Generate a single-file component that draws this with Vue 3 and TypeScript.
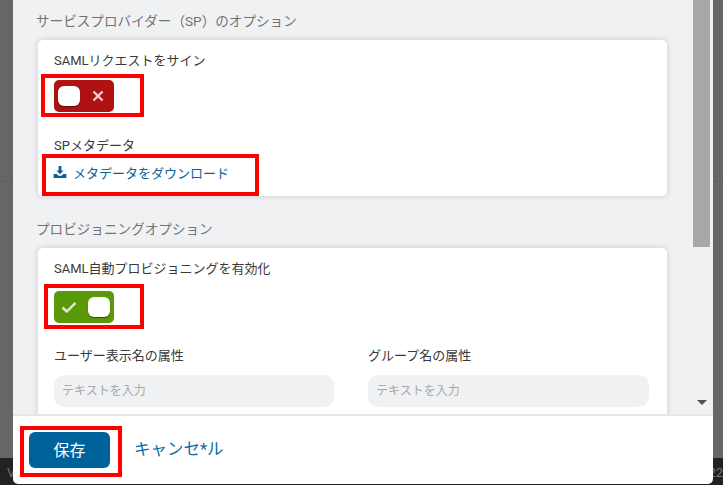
<script setup lang="ts">
const attributes: string[] = ['ユーザー表示名の属性', 'グループ名の属性']
</script>

<template>
  <div class="page">
    <div class="under-line"></div>
    <div class="under-bar"><span>V</span><span>22</span></div>
    <div class="modal">
      <div class="body">
        <div class="scroll">
          <h3 class="section-title first">サービスプロバイダー（SP）のオプション</h3>
          <section class="card first-card">
            <div class="label">SAMLリクエストをサイン</div>
            <div class="mark-wrap">
              <div class="toggle off">
                <span class="knob"></span>
                <svg class="toggle-icon" viewBox="0 0 12 12" width="12" height="12">
                  <path d="M1.5 1.5 10.5 10.5M10.5 1.5 1.5 10.5" fill="none" stroke="#efcfcf" stroke-width="2.4" />
                </svg>
              </div>
              <span class="mark mark-off"></span>
            </div>
            <div class="label sp-label">SPメタデータ</div>
            <div class="mark-wrap dl-wrap">
              <a class="download">
                <svg class="dl-icon" viewBox="0 0 14 14" width="14" height="14">
                  <path d="M5.6 1h2.8v4.4h2.2L7 9.2 3.4 5.4h2.2z" fill="#0b6298" />
                  <path d="M.6 9h3l2 1.8h2.8L10.400 9h3v4H.6z" fill="#0b6298" />
                </svg>
                <span>メタデータをダウンロード</span>
              </a>
              <span class="mark mark-dl"></span>
            </div>
          </section>

          <h3 class="section-title second">プロビジョニングオプション</h3>
          <section class="card second-card">
            <div class="label">SAML自動プロビジョニングを有効化</div>
            <div class="mark-wrap on-wrap">
              <div class="toggle on">
                <svg class="toggle-icon" viewBox="0 0 16 12" width="16" height="12">
                  <path d="M1.500 6.500 5.800 10.500 14.500 1.800" fill="none" stroke="#dfe9cf" stroke-width="2.400" />
                </svg>
                <span class="knob"></span>
              </div>
              <span class="mark mark-on"></span>
            </div>
            <div class="fields">
              <div v-for="name in attributes" :key="name" class="field">
                <div class="label">{{ name }}</div>
                <div class="input">テキストを入力</div>
              </div>
            </div>
          </section>
        </div>
        <div class="scrollbar">
          <div class="thumb"></div>
          <div class="arrow"></div>
        </div>
      </div>
      <div class="footer">
        <div class="save-wrap">
          <button class="save" type="button">保存</button>
          <span class="mark mark-save"></span>
        </div>
        <a class="cancel">キャンセ*ル</a>
      </div>
    </div>
  </div>
</template>

<style>
html, body { margin: 0; padding: 0; }
</style>

<style scoped>
.page {
  position: relative;
  width: 723px;
  height: 485px;
  overflow: hidden;
  background: #666;
  font-family: Roboto, "Noto Sans CJK JP", sans-serif;
}
.under-line {
  position: absolute;
  left: 0;
  right: 0;
  top: 181px;
  height: 1px;
  background: #5e5e5e;
}
.under-bar {
  position: absolute;
  left: 0;
  right: 0;
  top: 458px;
  height: 27px;
  background: #222;
  color: #777;
  font-size: 13px;
  line-height: 30px;
  display: flex;
  justify-content: space-between;
  padding: 0 0 0 7px;
}
.modal {
  position: relative;
  width: 700px;
  height: 484px;
  margin-left: 13px;
  display: flex;
  flex-direction: column;
  background: #fff;
  border-radius: 0 0 5px 5px;
  overflow: hidden;
}
.body {
  height: 414px;
  flex: none;
  display: flex;
  background: #f0f1f3;
  overflow: hidden;
}
.scroll {
  flex: 1;
  min-width: 0;
  padding: 0 13px 0 25px;
  margin-right: 13px;
}
.section-title {
  margin: 0 0 0 -2px;
  font-size: 13.6px;
  font-weight: 400;
  color: #737373;
  line-height: 20px;
}
.section-title.first { padding-top: 11px; }
.section-title.second { margin-top: 23px; }
.card {
  background: #fff;
  border-radius: 5px;
  box-shadow: 0 0 6px rgba(0, 0, 0, .16);
  padding: 12px 16px 0;
  box-sizing: border-box;
}
.first-card { margin-top: 9px; height: 156px; }
.second-card { margin-top: 9px; height: 190px; }
.label {
  font-size: 13px;
  line-height: 18px;
  color: #3a3a3a;
}
.sp-label { margin-top: 25px; }
.mark-wrap {
  position: relative;
  margin-top: 10px;
}
.on-wrap { margin-top: 13px; }
.toggle {
  width: 60px;
  height: 32px;
  border-radius: 5px;
  display: flex;
  align-items: center;
  box-sizing: border-box;
}
.toggle.off {
  background: #ae1212;
  padding-left: 4px;
  justify-content: flex-start;
}
.toggle.off .toggle-icon { margin-left: 12px; }
.toggle.on {
  background: #5a9a08;
  padding: 0 4px 0 7px;
  justify-content: space-between;
}
.knob {
  width: 22px;
  height: 20px;
  background: #fff;
  border-radius: 6px;
  box-shadow: 0 1px 1px rgba(0, 0, 0, .5);
}
.download {
  display: flex;
  align-items: center;
  gap: 6px;
  height: 20px;
  color: #0b6298;
  font-size: 13px;
}
.dl-icon { margin-left: -1px; }
.dl-wrap { margin-top: 7px; }
.mark {
  position: absolute;
  box-sizing: border-box;
  border: 4px solid #f00;
  pointer-events: none;
}
.mark-off { left: -13px; top: -6px; width: 103px; height: 43px; }
.mark-dl { left: -12px; top: -8px; width: 217px; height: 42px; }
.mark-on { left: -10px; top: -7px; width: 100px; height: 45px; }
.fields {
  display: grid;
  grid-template-columns: 280px 281px;
  column-gap: 34px;
  margin-top: 24px;
}
.input {
  margin-top: 10px;
  height: 32px;
  border-radius: 10px;
  background: #f0f1f3;
  color: #a8a8a8;
  font-size: 12px;
  line-height: 32px;
  padding-left: 8px;
}
.scrollbar {
  position: relative;
  width: 20px;
  flex: none;
  background: #f1f1f1;
}
.thumb {
  width: 17px;
  height: 247px;
  background: #a8a8a8;
}
.arrow {
  position: absolute;
  left: 4px;
  top: 400px;
  width: 0;
  height: 0;
  border-left: 5px solid transparent;
  border-right: 5px solid transparent;
  border-top: 5px solid #505050;
}
.footer {
  flex: 1;
  display: flex;
  align-items: flex-start;
  gap: 24px;
  padding: 16px 0 0 16px;
  border-top: 2px solid #e4e5e7;
}
.save-wrap { position: relative; }
.save {
  display: block;
  width: 81px;
  height: 36px;
  padding: 0 0 3px;
  border: 0;
  border-radius: 6px;
  background: #00629b;
  color: #fff;
  font-family: inherit;
  font-size: 16px;
}
.mark-save { left: -9px; top: -6px; width: 102px; height: 51px; }
.cancel {
  color: #0b6aa5;
  font-size: 16.5px;
  line-height: 36px;
}
</style>
